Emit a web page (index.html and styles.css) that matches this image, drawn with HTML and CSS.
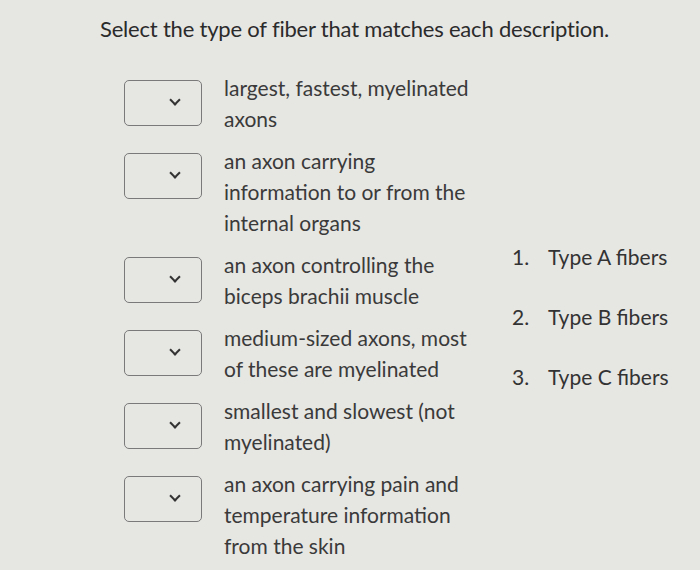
FILE: index.html
```html
<!DOCTYPE html>
<html lang="en">
<head>
    <meta charset="UTF-8" />
    <title>Fiber types – matching</title>
    <link rel="stylesheet" href="styles.css">
</head>
<body>

<div class="question">
    <h1 class="prompt">Select the type of fiber that matches each description.</h1>

    <div class="match-area">
        <div class="rows">
            <div class="row">
                <div class="picker"><span class="chevron"></span></div>
                <p class="desc">largest, fastest, myelinated<br>axons</p>
            </div>
            <div class="row">
                <div class="picker"><span class="chevron"></span></div>
                <p class="desc">an axon carrying<br>information to or from the<br>internal organs</p>
            </div>
            <div class="row">
                <div class="picker"><span class="chevron"></span></div>
                <p class="desc">an axon controlling the<br>biceps brachii muscle</p>
            </div>
            <div class="row">
                <div class="picker"><span class="chevron"></span></div>
                <p class="desc">medium-sized axons, most<br>of these are myelinated</p>
            </div>
            <div class="row">
                <div class="picker"><span class="chevron"></span></div>
                <p class="desc">smallest and slowest (not<br>myelinated)</p>
            </div>
            <div class="row">
                <div class="picker"><span class="chevron"></span></div>
                <p class="desc">an axon carrying pain and<br>temperature information<br>from the skin</p>
            </div>
        </div>

        <ol class="answers">
            <li>Type A fibers</li>
            <li>Type B fibers</li>
            <li>Type C fibers</li>
        </ol>
    </div>
</div>

</body>
</html>
```

FILE: styles.css
```css
/* PAGE */
html, body {
    margin: 0;
    padding: 0;
    height: 100%;
    background: #e6e6e3;
    color: #333;
    font-family: Lato, 'Open Sans', Arial, sans-serif;
    overflow: hidden;
}

.question {
    padding: 15px 0 0 100px;
}

.prompt {
    margin: 0 0 30px;
    font-size: 22px;
    font-weight: 400;
    color: #2b2b2b;
    letter-spacing: -0.2px;
}

.match-area {
    display: flex;
    align-items: center;
}

.rows {
    display: flex;
    flex-direction: column;
    gap: 11px;
    width: 376px;
    padding-left: 24px;
}

.row {
    display: flex;
    align-items: flex-start;
    gap: 22px;
}

.picker {
    position: relative;
    width: 76px;
    height: 44px;
    margin-top: 8px;
    border: 1.5px solid #7a7a7a;
    border-radius: 5px;
    flex-shrink: 0;
}

.chevron {
    position: absolute;
    right: 22px;
    top: 15px;
    width: 6px;
    height: 6px;
    border-right: 2px solid #333;
    border-bottom: 2px solid #333;
    transform: rotate(45deg);
}

.desc {
    margin: 0;
    font-size: 21px;
    line-height: 31px;
    color: #3a3a3a;
}

/* ANSWER LIST */
.answers {
    margin: 0 0 0 12px;
    padding: 0;
    list-style: none;
    counter-reset: answer;
    font-size: 21px;
    color: #333;
}

.answers li {
    counter-increment: answer;
    line-height: 24px;
    margin-bottom: 36px;
}
.answers li::before {
    content: counter(answer) ".";
    display: inline-block;
    width: 36px;
}
.answers li:last-child {
    margin-bottom: 0;
}
```
